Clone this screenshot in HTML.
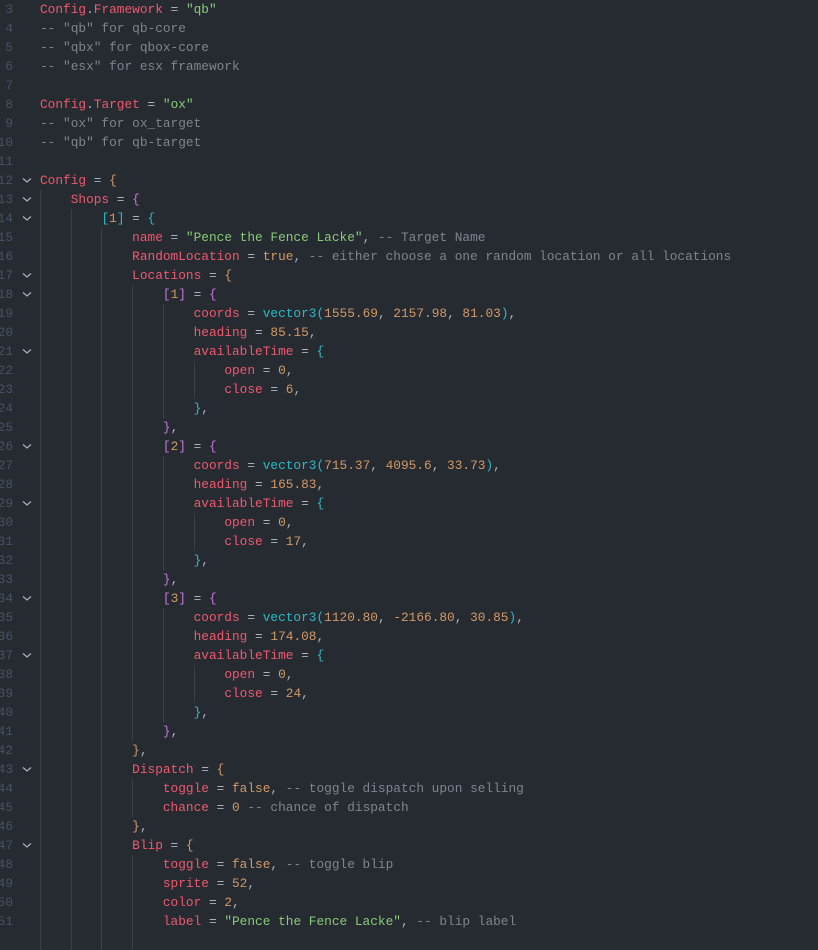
<!DOCTYPE html>
<html><head><meta charset="utf-8"><style>
html,body{margin:0;padding:0;background:#262a31;width:818px;height:935px;overflow:hidden}
.l{position:absolute;left:0;height:19px;line-height:19px;font-family:"Liberation Mono",monospace;font-size:12.8px;white-space:pre;color:#abb2bf;width:818px}
.num{position:absolute;left:-20px;width:33px;text-align:right;color:#495162}
.chev{position:absolute;left:22px;top:6px}
.code{position:absolute;left:40px;top:0}
i{display:inline-block;width:30.72px;height:19px;vertical-align:top;box-sizing:border-box;border-left:1px solid #3b4048}
.k{color:#ef596f}.s{color:#89ca78}.n{color:#d19a66}.c{color:#7f848e}.f{color:#2bbac5}
.b1{color:#d19a66}.b2{color:#c678dd}.b3{color:#2bbac5}
</style></head><body>
<div class="l" style="top:0"><span class="num">3</span><span class="code"><span class="k">Config</span>.<span class="k">Framework</span> = <span class="s">"qb"</span></span></div>
<div class="l" style="top:19px"><span class="num">4</span><span class="code"><span class="c">-- "qb" for qb-core</span></span></div>
<div class="l" style="top:38px"><span class="num">5</span><span class="code"><span class="c">-- "qbx" for qbox-core</span></span></div>
<div class="l" style="top:57px"><span class="num">6</span><span class="code"><span class="c">-- "esx" for esx framework</span></span></div>
<div class="l" style="top:76px"><span class="num">7</span></div>
<div class="l" style="top:95px"><span class="num">8</span><span class="code"><span class="k">Config</span>.<span class="k">Target</span> = <span class="s">"ox"</span></span></div>
<div class="l" style="top:114px"><span class="num">9</span><span class="code"><span class="c">-- "ox" for ox_target</span></span></div>
<div class="l" style="top:133px"><span class="num">10</span><span class="code"><span class="c">-- "qb" for qb-target</span></span></div>
<div class="l" style="top:152px"><span class="num">11</span></div>
<div class="l" style="top:171px"><span class="num">12</span><svg class="chev" width="10" height="7"><path d="M1 1.5 L5 5 L9 1.5" stroke="#abb2bf" fill="none" stroke-width="1.2"/></svg><span class="code"><span class="k">Config</span> = <span class="b1">{</span></span></div>
<div class="l" style="top:190px"><span class="num">13</span><svg class="chev" width="10" height="7"><path d="M1 1.5 L5 5 L9 1.5" stroke="#abb2bf" fill="none" stroke-width="1.2"/></svg><span class="code"><i></i><span class="k">Shops</span> = <span class="b2">{</span></span></div>
<div class="l" style="top:209px"><span class="num">14</span><svg class="chev" width="10" height="7"><path d="M1 1.5 L5 5 L9 1.5" stroke="#abb2bf" fill="none" stroke-width="1.2"/></svg><span class="code"><i></i><i></i><span class="b3">[</span><span class="n">1</span><span class="b3">]</span> = <span class="b3">{</span></span></div>
<div class="l" style="top:228px"><span class="num">15</span><span class="code"><i></i><i></i><i></i><span class="k">name</span> = <span class="s">"Pence the Fence Lacke"</span>, <span class="c">-- Target Name</span></span></div>
<div class="l" style="top:247px"><span class="num">16</span><span class="code"><i></i><i></i><i></i><span class="k">RandomLocation</span> = <span class="n">true</span>, <span class="c">-- either choose a one random location or all locations</span></span></div>
<div class="l" style="top:266px"><span class="num">17</span><svg class="chev" width="10" height="7"><path d="M1 1.5 L5 5 L9 1.5" stroke="#abb2bf" fill="none" stroke-width="1.2"/></svg><span class="code"><i></i><i></i><i></i><span class="k">Locations</span> = <span class="b1">{</span></span></div>
<div class="l" style="top:285px"><span class="num">18</span><svg class="chev" width="10" height="7"><path d="M1 1.5 L5 5 L9 1.5" stroke="#abb2bf" fill="none" stroke-width="1.2"/></svg><span class="code"><i></i><i></i><i></i><i></i><span class="b2">[</span><span class="n">1</span><span class="b2">]</span> = <span class="b2">{</span></span></div>
<div class="l" style="top:304px"><span class="num">19</span><span class="code"><i></i><i></i><i></i><i></i><i></i><span class="k">coords</span> = <span class="f">vector3</span><span class="b3">(</span><span class="n">1555.69</span>, <span class="n">2157.98</span>, <span class="n">81.03</span><span class="b3">)</span>,</span></div>
<div class="l" style="top:323px"><span class="num">20</span><span class="code"><i></i><i></i><i></i><i></i><i></i><span class="k">heading</span> = <span class="n">85.15</span>,</span></div>
<div class="l" style="top:342px"><span class="num">21</span><svg class="chev" width="10" height="7"><path d="M1 1.5 L5 5 L9 1.5" stroke="#abb2bf" fill="none" stroke-width="1.2"/></svg><span class="code"><i></i><i></i><i></i><i></i><i></i><span class="k">availableTime</span> = <span class="b3">{</span></span></div>
<div class="l" style="top:361px"><span class="num">22</span><span class="code"><i></i><i></i><i></i><i></i><i></i><i></i><span class="k">open</span> = <span class="n">0</span>,</span></div>
<div class="l" style="top:380px"><span class="num">23</span><span class="code"><i></i><i></i><i></i><i></i><i></i><i></i><span class="k">close</span> = <span class="n">6</span>,</span></div>
<div class="l" style="top:399px"><span class="num">24</span><span class="code"><i></i><i></i><i></i><i></i><i></i><span class="b3">}</span>,</span></div>
<div class="l" style="top:418px"><span class="num">25</span><span class="code"><i></i><i></i><i></i><i></i><span class="b2">}</span>,</span></div>
<div class="l" style="top:437px"><span class="num">26</span><svg class="chev" width="10" height="7"><path d="M1 1.5 L5 5 L9 1.5" stroke="#abb2bf" fill="none" stroke-width="1.2"/></svg><span class="code"><i></i><i></i><i></i><i></i><span class="b2">[</span><span class="n">2</span><span class="b2">]</span> = <span class="b2">{</span></span></div>
<div class="l" style="top:456px"><span class="num">27</span><span class="code"><i></i><i></i><i></i><i></i><i></i><span class="k">coords</span> = <span class="f">vector3</span><span class="b3">(</span><span class="n">715.37</span>, <span class="n">4095.6</span>, <span class="n">33.73</span><span class="b3">)</span>,</span></div>
<div class="l" style="top:475px"><span class="num">28</span><span class="code"><i></i><i></i><i></i><i></i><i></i><span class="k">heading</span> = <span class="n">165.83</span>,</span></div>
<div class="l" style="top:494px"><span class="num">29</span><svg class="chev" width="10" height="7"><path d="M1 1.5 L5 5 L9 1.5" stroke="#abb2bf" fill="none" stroke-width="1.2"/></svg><span class="code"><i></i><i></i><i></i><i></i><i></i><span class="k">availableTime</span> = <span class="b3">{</span></span></div>
<div class="l" style="top:513px"><span class="num">30</span><span class="code"><i></i><i></i><i></i><i></i><i></i><i></i><span class="k">open</span> = <span class="n">0</span>,</span></div>
<div class="l" style="top:532px"><span class="num">31</span><span class="code"><i></i><i></i><i></i><i></i><i></i><i></i><span class="k">close</span> = <span class="n">17</span>,</span></div>
<div class="l" style="top:551px"><span class="num">32</span><span class="code"><i></i><i></i><i></i><i></i><i></i><span class="b3">}</span>,</span></div>
<div class="l" style="top:570px"><span class="num">33</span><span class="code"><i></i><i></i><i></i><i></i><span class="b2">}</span>,</span></div>
<div class="l" style="top:589px"><span class="num">34</span><svg class="chev" width="10" height="7"><path d="M1 1.5 L5 5 L9 1.5" stroke="#abb2bf" fill="none" stroke-width="1.2"/></svg><span class="code"><i></i><i></i><i></i><i></i><span class="b2">[</span><span class="n">3</span><span class="b2">]</span> = <span class="b2">{</span></span></div>
<div class="l" style="top:608px"><span class="num">35</span><span class="code"><i></i><i></i><i></i><i></i><i></i><span class="k">coords</span> = <span class="f">vector3</span><span class="b3">(</span><span class="n">1120.80</span>, <span class="n">-2166.80</span>, <span class="n">30.85</span><span class="b3">)</span>,</span></div>
<div class="l" style="top:627px"><span class="num">36</span><span class="code"><i></i><i></i><i></i><i></i><i></i><span class="k">heading</span> = <span class="n">174.08</span>,</span></div>
<div class="l" style="top:646px"><span class="num">37</span><svg class="chev" width="10" height="7"><path d="M1 1.5 L5 5 L9 1.5" stroke="#abb2bf" fill="none" stroke-width="1.2"/></svg><span class="code"><i></i><i></i><i></i><i></i><i></i><span class="k">availableTime</span> = <span class="b3">{</span></span></div>
<div class="l" style="top:665px"><span class="num">38</span><span class="code"><i></i><i></i><i></i><i></i><i></i><i></i><span class="k">open</span> = <span class="n">0</span>,</span></div>
<div class="l" style="top:684px"><span class="num">39</span><span class="code"><i></i><i></i><i></i><i></i><i></i><i></i><span class="k">close</span> = <span class="n">24</span>,</span></div>
<div class="l" style="top:703px"><span class="num">40</span><span class="code"><i></i><i></i><i></i><i></i><i></i><span class="b3">}</span>,</span></div>
<div class="l" style="top:722px"><span class="num">41</span><span class="code"><i></i><i></i><i></i><i></i><span class="b2">}</span>,</span></div>
<div class="l" style="top:741px"><span class="num">42</span><span class="code"><i></i><i></i><i></i><span class="b1">}</span>,</span></div>
<div class="l" style="top:760px"><span class="num">43</span><svg class="chev" width="10" height="7"><path d="M1 1.5 L5 5 L9 1.5" stroke="#abb2bf" fill="none" stroke-width="1.2"/></svg><span class="code"><i></i><i></i><i></i><span class="k">Dispatch</span> = <span class="b1">{</span></span></div>
<div class="l" style="top:779px"><span class="num">44</span><span class="code"><i></i><i></i><i></i><i></i><span class="k">toggle</span> = <span class="n">false</span>, <span class="c">-- toggle dispatch upon selling</span></span></div>
<div class="l" style="top:798px"><span class="num">45</span><span class="code"><i></i><i></i><i></i><i></i><span class="k">chance</span> = <span class="n">0</span> <span class="c">-- chance of dispatch</span></span></div>
<div class="l" style="top:817px"><span class="num">46</span><span class="code"><i></i><i></i><i></i><span class="b1">}</span>,</span></div>
<div class="l" style="top:836px"><span class="num">47</span><svg class="chev" width="10" height="7"><path d="M1 1.5 L5 5 L9 1.5" stroke="#abb2bf" fill="none" stroke-width="1.2"/></svg><span class="code"><i></i><i></i><i></i><span class="k">Blip</span> = <span class="b1">{</span></span></div>
<div class="l" style="top:855px"><span class="num">48</span><span class="code"><i></i><i></i><i></i><i></i><span class="k">toggle</span> = <span class="n">false</span>, <span class="c">-- toggle blip</span></span></div>
<div class="l" style="top:874px"><span class="num">49</span><span class="code"><i></i><i></i><i></i><i></i><span class="k">sprite</span> = <span class="n">52</span>,</span></div>
<div class="l" style="top:893px"><span class="num">50</span><span class="code"><i></i><i></i><i></i><i></i><span class="k">color</span> = <span class="n">2</span>,</span></div>
<div class="l" style="top:912px"><span class="num">51</span><span class="code"><i></i><i></i><i></i><i></i><span class="k">label</span> = <span class="s">"Pence the Fence Lacke"</span>, <span class="c">-- blip label</span></span></div>
<div class="l" style="top:931px"><span class="code"><i></i><i></i><i></i><i></i></span></div>
</body></html>
